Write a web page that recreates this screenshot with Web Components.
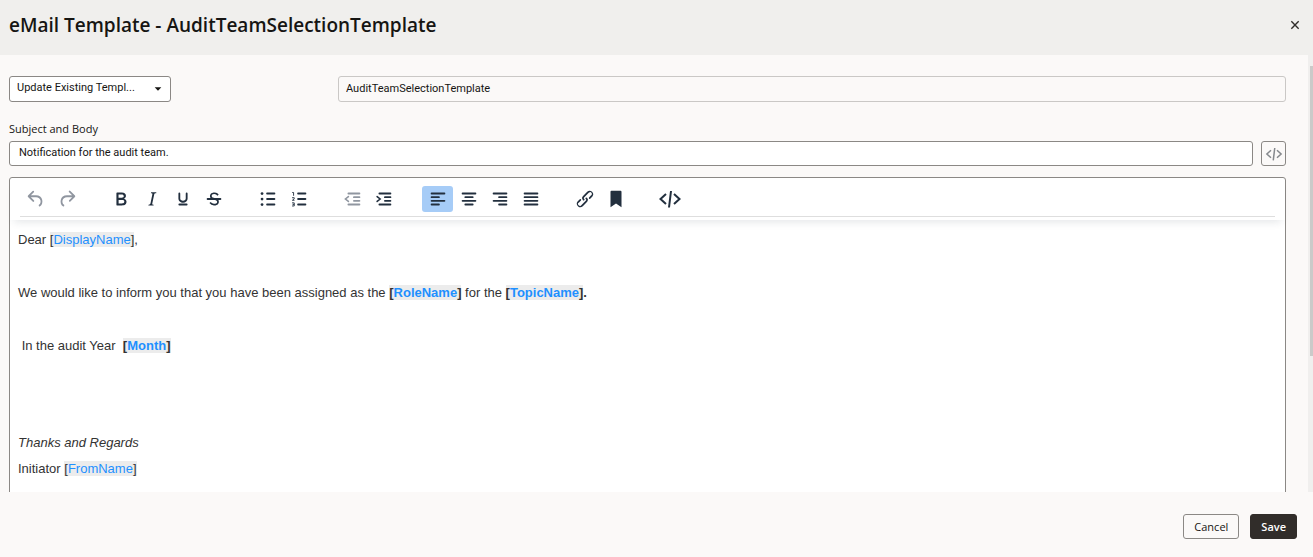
<!DOCTYPE html>
<html lang="en">
<head>
<meta charset="utf-8">
<title>eMail Template</title>
<style>
  html, body { margin: 0; height: 100%; }
  body { background: #fbf9f8; color: #161513; font-family: "Open Sans", "Noto Sans", sans-serif; font-size: 11px; line-height: 16px; }
</style>
</head>
<body>
<template-dialog heading="eMail Template - AuditTeamSelectionTemplate">
  <template-form></template-form>
  <dialog-button slot="footer">Cancel</dialog-button>
  <dialog-button slot="footer" primary>Save</dialog-button>
</template-dialog>

<script>
const define = (name, html, setup) => {
  const tpl = document.createElement('template');
  tpl.innerHTML = html.trim();
  customElements.define(name, class extends HTMLElement {
    constructor() {
      super();
      this.attachShadow({ mode: 'open' }).append(tpl.content.cloneNode(true));
    }
    connectedCallback() { if (setup) setup(this, this.shadowRoot); }
  });
};

const line = (x, y, w) => `<rect x="${x}" y="${y}" width="${w}" height="2" rx="1"/>`;
const ICONS = {
  undo: '<path d="M6.4 8H12c3.7 0 6.2 2 6.8 5.1.6 2.7-.4 5.6-2.3 6.8a1 1 0 01-1-1.8c1.1-.6 1.8-2.7 1.4-4.6-.5-2.1-2.1-3.5-4.9-3.5H6.4l3.3 3.3a1 1 0 11-1.4 1.4l-5-5a1 1 0 010-1.4l5-5a1 1 0 011.4 1.4L6.4 8z"/>',
  redo: '<path d="M17.6 10H12c-2.8 0-4.4 1.4-4.9 3.5-.4 2 .3 4 1.4 4.6a1 1 0 11-1 1.8c-2-1.2-2.9-4.1-2.3-6.8.6-3 3-5.1 6.8-5.1h5.6l-3.3-3.3a1 1 0 111.4-1.4l5 5a1 1 0 010 1.4l-5 5a1 1 0 01-1.4-1.4l3.3-3.3z"/>',
  bold: '<path d="M7.8 19c-.3 0-.5 0-.6-.2l-.2-.5V5.7c0-.2 0-.4.2-.5l.6-.2h5c1.5 0 2.7.3 3.5 1 .7.6 1.1 1.4 1.1 2.5a3 3 0 01-.6 1.9c-.4.6-1 1-1.6 1.2.4.1.9.3 1.3.6s.8.7 1 1.2c.4.4.5 1 .5 1.6 0 1.3-.4 2.3-1.3 3-.8.7-2.1 1-3.8 1H7.8zm5-8.3c.6 0 1.2-.1 1.6-.5.4-.3.6-.7.6-1.3 0-1.1-.8-1.7-2.3-1.7H9.3v3.5h3.4zm.5 6c.7 0 1.3-.1 1.7-.4.4-.4.6-.9.6-1.5s-.2-1-.7-1.4c-.4-.3-1-.4-2-.4H9.4v3.8h4z"/>',
  italic: '<path d="M16.7 4.7l-.1.9h-.3c-.6 0-1 0-1.4.3-.3.3-.4.6-.5 1.1l-2.1 9.8v.6c0 .5.4.8 1.4.8h.2l-.2.8H8l.2-.8h.2c1.1 0 1.8-.5 2-1.5l2-9.8.1-.5c0-.6-.4-.8-1.4-.8h-.3l.2-.9h5.8z"/>',
  underline: '<path d="M16 5c.6 0 1 .4 1 1v5.5a4 4 0 01-.4 1.8l-1 1.4a5.3 5.3 0 01-5.5 1 5 5 0 01-1.6-1c-.5-.4-.8-.9-1.1-1.4a4 4 0 01-.4-1.8V6c0-.6.4-1 1-1s1 .4 1 1v5.5c0 .3 0 .6.2 1l.6.7a3.3 3.3 0 002.2.8 3.4 3.4 0 002.2-.8c.3-.2.4-.5.6-.8l.2-.9V6c0-.6.4-1 1-1zM8 17h8c.6 0 1 .4 1 1s-.4 1-1 1H8a1 1 0 010-2z"/>',
  strike: '<path d="M15.6 8.5c-.5-.7-1-1.1-1.3-1.3-.6-.4-1.3-.6-2-.6-2.7 0-2.8 1.7-2.8 2.1 0 1.6 1.8 2 3.2 2.3 4.4.9 4.6 2.8 4.6 3.9 0 1.4-.7 4.1-5 4.1A6.2 6.2 0 017 16.4l1.5-1.1c.4.6 1.6 2 3.7 2 1.6 0 2.5-.4 3-1.2.4-.8.3-2-.8-2.6-.7-.4-1.6-.7-2.9-1-1-.2-3.9-.8-3.9-3.6C7.6 6 10.3 5 12.4 5c2.9 0 4.2 1.6 4.7 2.4l-1.5 1.1z"/>' + line(4, 11, 16),
  bullets: line(10, 5, 10) + line(10, 11, 10) + line(10, 17, 10) + '<circle cx="5.5" cy="6" r="1.5"/><circle cx="5.5" cy="12" r="1.5"/><circle cx="5.5" cy="18" r="1.5"/>',
  numbers: line(10, 5, 10) + line(10, 11, 10) + line(10, 17, 10) + '<path d="M4.6 4.9h1.5v3.6M4.4 10.6h2.4v1.2L4.8 13.4h2.3M4.4 16.2h2.4v3.4H4.4M5 17.9h1.8" fill="none" stroke="currentColor"/>',
  outdent: line(6, 5, 14) + line(12, 9, 8) + line(12, 13, 8) + line(6, 17, 14) + '<path d="M7 9.3L3.7 12 7 14.7" fill="none" stroke="currentColor" stroke-width="1.7" stroke-linecap="round"/>',
  indent: line(6, 5, 14) + line(12, 9, 8) + line(12, 13, 8) + line(6, 17, 14) + '<path d="M4.5 9.3L7.8 12l-3.3 2.7" fill="none" stroke="currentColor" stroke-width="1.7" stroke-linecap="round"/>',
  left: line(4, 5, 16) + line(4, 9, 10) + line(4, 13, 16) + line(4, 17, 10),
  center: line(4, 5, 16) + line(7, 9, 10) + line(4, 13, 16) + line(7, 17, 10),
  right: line(4, 5, 16) + line(10, 9, 10) + line(4, 13, 16) + line(10, 17, 10),
  justify: line(4, 5, 16) + line(4, 9, 16) + line(4, 13, 16) + line(4, 17, 16),
  link: '<path d="M6.2 12.3a1 1 0 011.4 1.4l-2.1 2a2 2 0 102.7 2.8l4.8-4.8a1 1 0 000-1.4 1 1 0 111.4-1.3 2.9 2.9 0 010 4L9.6 20a3.9 3.9 0 01-5.5-5.5l2-2zm11.6-.6a1 1 0 01-1.4-1.4l2-2a2 2 0 10-2.6-2.8L11 10.3a1 1 0 000 1.4A1 1 0 119.6 13a2.9 2.9 0 010-4L14.4 4a3.9 3.9 0 015.5 5.5l-2 2z"/>',
  bookmark: '<path d="M6 4v17l6-4 6 4V4c0-.6-.4-1-1-1H7a1 1 0 00-1 1z"/>',
  code: '<path d="M8 7l-5.5 5L8 17M16 7l5.500 5L16 17M13 4l-2 16.500" fill="none" stroke="currentColor" stroke-width="2"/>',
  close: '<path d="M8 8l8 8M16 8l-8 8" fill="none" stroke="currentColor" stroke-width="1.5"/>',
  caret: '<path d="M8 10h8l-4 4z"/>'
};

define('ui-icon', `
  <style>
    :host { display: block; width: 22px; height: 22px; }
    svg { display: block; width: 100%; height: 100%; fill: currentColor; }
  </style>
  <svg viewBox="0 0 24 24" aria-hidden="true"></svg>`,
  (el, root) => { root.querySelector('svg').innerHTML = ICONS[el.getAttribute('name')]; });

define('dialog-button', `
  <style>
    :host { display: block; }
    button { box-sizing: border-box; height: 25px; padding: 0 10px; border: 1px solid #8b8885; border-radius: 3px; background: transparent; color: #161513; font: 500 11px/16px "Open Sans", sans-serif; }
    :host([primary]) button { background: #312d2a; border-color: #312d2a; color: #fff; font-weight: 600; }
  </style>
  <button type="button"><slot></slot></button>`);

define('template-dialog', `
  <style>
    :host { display: flex; flex-direction: column; height: 100vh; overflow: hidden; }
    header { display: flex; align-items: center; justify-content: space-between; box-sizing: border-box; height: 55px; flex: none; padding: 0 7px 6px 9px; background: #f0efed; }
    h1 { margin: 0; font-size: 19px; line-height: 24px; font-weight: 600; }
    header button { padding: 0; border: 0; background: none; color: #302d2a; }
    main { display: flex; flex: 1; min-height: 0; }
    .scroll { flex: 1; min-width: 0; overflow: hidden; }
    .bar { flex: none; box-sizing: border-box; width: 5px; padding: 11px 0 0 2px; background: #f0efee; }
    .bar div { height: 68%; background: #cbcac9; }
    footer { display: flex; justify-content: flex-end; gap: 11px; box-sizing: border-box; height: 65px; flex: none; padding: 22px 16px 0; }
  </style>
  <header>
    <h1></h1>
    <button type="button" aria-label="Close"><ui-icon name="close"></ui-icon></button>
  </header>
  <main><div class="scroll"><slot></slot></div><div class="bar" aria-hidden="true"><div></div></div></main>
  <footer><slot name="footer"></slot></footer>`,
  (el, root) => { root.querySelector('h1').textContent = el.getAttribute('heading'); });

define('template-form', `
  <style>
    :host { display: block; padding: 21px 22px 0 9px; }
    .row { display: grid; grid-template-columns: 1fr 3fr; gap: 13px; }
    .pick { display: grid; width: 162px; align-items: center; }
    .pick > * { grid-area: 1 / 1; }
    .pick ui-icon { width: 20px; height: 20px; justify-self: end; margin-right: 3px; pointer-events: none; }
    select, input { box-sizing: border-box; width: 100%; min-width: 0; height: 26px; margin: 0; padding: 0 7px 2px; border: 1px solid #8b8885; border-radius: 3px; background: #fff; color: #161513; font: 11px/16px Roboto, sans-serif; appearance: none; }
    input[readonly] { background: transparent; border-color: #cac8c6; }
    label { display: block; margin: 19px 0 4px; }
    .subject { display: flex; gap: 8px; margin-bottom: 11px; }
    .subject input { flex: 1; height: 25px; padding-left: 9px; }
    .subject button { display: grid; place-items: center; box-sizing: border-box; width: 25px; height: 25px; padding: 0; border: 1px solid #8b8885; border-radius: 3px; background: transparent; color: #85888c; }
    .subject ui-icon { width: 18px; height: 18px; }
  </style>
  <div class="row">
    <div class="pick">
      <select aria-label="Action"><option>Update Existing Templ...</option></select>
      <ui-icon name="caret"></ui-icon>
    </div>
    <input aria-label="Template name" readonly value="AuditTeamSelectionTemplate">
  </div>
  <label for="subject">Subject and Body</label>
  <div class="subject">
    <input id="subject" value="Notification for the audit team.">
    <button type="button" aria-label="Insert token"><ui-icon name="code"></ui-icon></button>
  </div>
  <rich-editor>
    <mail-body></mail-body>
  </rich-editor>`);

define('tool-button', `
  <style>
    :host { display: block; }
    button { display: grid; place-items: center; width: 31px; height: 26px; padding: 0; border: 0; border-radius: 3px; background: none; color: #222f3e; }
    :host([pressed]) button { background: #a6ccf7; }
    :host([wide]) ui-icon { width: 24px; height: 24px; }
    button:disabled { color: #9096a0; }
  </style>
  <button type="button"></button>`,
  (el, root) => {
    const name = el.getAttribute('icon');
    const button = root.querySelector('button');
    button.setAttribute('aria-label', name);
    button.disabled = el.hasAttribute('off');
    const icon = document.createElement('ui-icon');
    icon.setAttribute('name', name);
    button.replaceChildren(icon);
  });

define('rich-editor', `
  <style>
    :host { display: block; min-height: 400px; border: 1px solid #8b8885; border-radius: 3px 3px 0 0; background: #fff; }
    .tools { padding: 8px 10px 3px; box-shadow: 0 6px 8px -4px rgba(34, 47, 62, .12); }
    .groups { display: flex; gap: 23px; padding-bottom: 4px; border-bottom: 1px solid #dedede; }
    .groups div { display: flex; }
  </style>
  <div class="tools">
    <div class="groups" role="toolbar" aria-label="Formatting">
      <div><tool-button icon="undo" off></tool-button><tool-button icon="redo" off></tool-button></div>
      <div><tool-button icon="bold"></tool-button><tool-button icon="italic"></tool-button><tool-button icon="underline"></tool-button><tool-button icon="strike"></tool-button></div>
      <div><tool-button icon="bullets"></tool-button><tool-button icon="numbers"></tool-button></div>
      <div><tool-button icon="outdent" off></tool-button><tool-button icon="indent"></tool-button></div>
      <div><tool-button icon="left" pressed></tool-button><tool-button icon="center"></tool-button><tool-button icon="right"></tool-button><tool-button icon="justify"></tool-button></div>
      <div><tool-button icon="link"></tool-button><tool-button icon="bookmark"></tool-button></div>
      <div><tool-button icon="code" wide></tool-button></div>
    </div>
  </div>
  <slot></slot>`);

define('mail-token', `<style>:host { display: inline; background: #ececec; } span { color: #1e90ff; }</style>[<span><slot></slot></span>]`);

define('mail-body', `
  <style>
    :host { display: block; padding: 11px 8px; color: #333; font: 13px/18px "Liberation Sans", Arial, sans-serif; }
    p { margin: 0 0 35px; white-space: pre-wrap; }
    .last { margin-bottom: 79px; }
    .sign { margin-bottom: 8px; }
  </style>
  <p>Dear <mail-token>DisplayName</mail-token>,</p>
  <p>We would like to inform you that you have been assigned as the <b><mail-token>RoleName</mail-token></b> for the <b><mail-token>TopicName</mail-token>.</b></p>
  <p class="last"> In the audit Year  <b><mail-token>Month</mail-token></b></p>
  <p class="sign"><i>Thanks and Regards</i></p>
  <p class="sign">Initiator <mail-token>FromName</mail-token></p>`);
</script>
</body>
</html>
